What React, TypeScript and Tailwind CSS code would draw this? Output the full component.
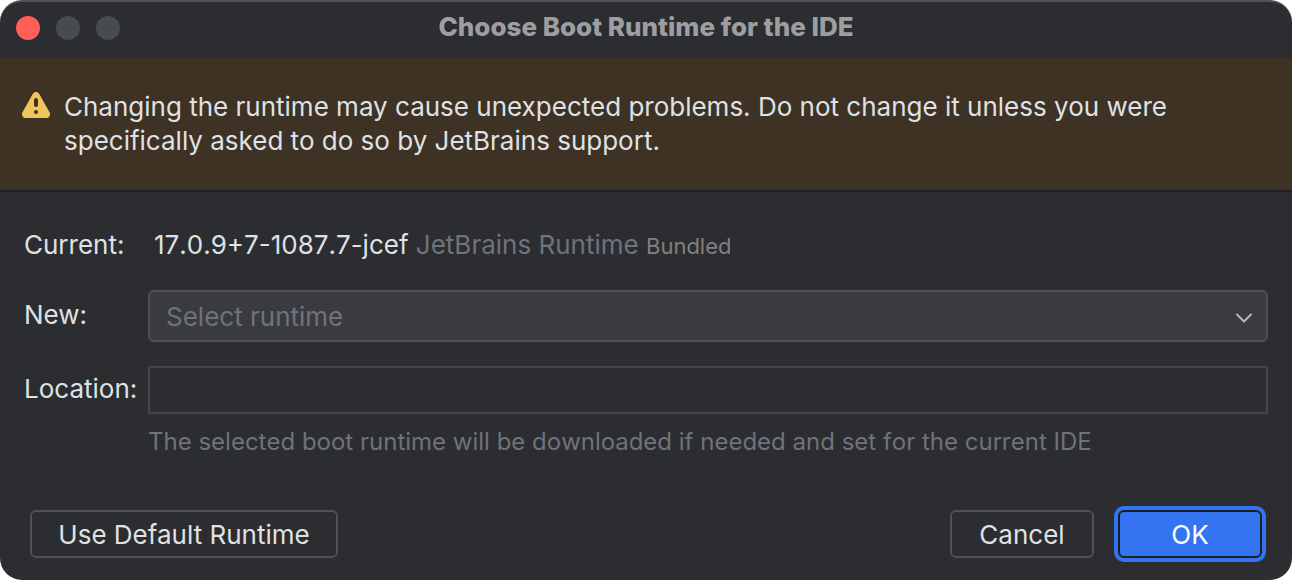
import { useState } from 'react'

const plainButton =
  'h-12 rounded-md border-2 border-[#4e5157] pt-0.5 text-[26px] leading-8 text-[#dfe1e5]'

function WarningIcon() {
  return (
    <svg className="h-8 w-8 shrink-0" viewBox="0 0 32 32" aria-hidden="true">
      <path
        d="M12.9 3.8C14.3 1.4 17.7 1.4 19.1 3.8L29.5 22.2C30.9 24.8 29.3 28 26.3 28H5.7C2.7 28 1.1 24.8 2.5 22.2Z"
        fill="#f2c55c"
      />
      <rect x="14" y="8" width="4" height="9" rx="2" fill="#3d3223" />
      <circle cx="16" cy="22" r="2" fill="#3d3223" />
    </svg>
  )
}

export default function App() {
  const [location, setLocation] = useState('')

  return (
    <main className="flex min-h-screen w-full flex-col overflow-hidden rounded-[22px] border-t-2 border-[#505356] bg-[#2b2d30] font-['Inter',sans-serif] text-[26px] leading-[34px] text-[#dfe1e5]">
      <header className="grid h-14 grid-cols-[1fr_auto_1fr] items-center px-4 pb-1">
        <div className="flex gap-4">
          <button type="button" aria-label="Close" className="h-6 w-6 rounded-full bg-[#ff5f57]" />
          <button type="button" aria-label="Minimize" className="h-6 w-6 rounded-full bg-[#484b4d]" />
          <button type="button" aria-label="Zoom" className="h-6 w-6 rounded-full bg-[#484b4d]" />
        </div>
        <h1 className="pb-0.5 font-extrabold text-[#9d9ea0]">Choose Boot Runtime for the IDE</h1>
      </header>

      <section className="flex gap-3 border-b-2 border-[#1e1f22] bg-[#3d3223] pb-8 pl-5 pr-24 pt-8">
        <WarningIcon />
        <p>
          Changing the runtime may cause unexpected problems. Do not change it unless you were
          specifically asked to do so by JetBrains support.
        </p>
      </section>

      <form className="flex flex-1 flex-col" onSubmit={(event) => event.preventDefault()}>
        <div className="grid grid-cols-[124px_1fr] items-center px-6 pt-9">
          <span>Current:</span>
          <p className="pl-1.5 [font-kerning:none]">
            17.0.9+7-1087.7-jcef <span className="text-[#6f737a]">JetBrains Runtime</span>{' '}
            <span className="text-[22px] leading-none text-[#808080]">Bundled</span>
          </p>

          <label htmlFor="runtime" className="mt-[26px]">New:</label>
          <div className="relative mt-7">
            <select
              id="runtime"
              defaultValue=""
              className="block h-[52px] w-full appearance-none rounded-md border-2 border-[#4e5157] bg-[#393b40] px-4 pt-0.5 text-[#6f737a]"
            >
              <option value="">Select runtime</option>
            </select>
            <svg
              className="pointer-events-none absolute right-4 top-5 h-4 w-4"
              viewBox="0 0 16 16"
              fill="none"
              stroke="#b4b8bf"
              strokeWidth="2"
              strokeLinecap="round"
              strokeLinejoin="round"
              aria-hidden="true"
            >
              <path d="M1 4.5L8 11.5L15 4.5" />
            </svg>
          </div>

          <label htmlFor="location" className="mt-[22px]">Location:</label>
          <input
            id="location"
            type="text"
            value={location}
            onChange={(event) => setLocation(event.target.value)}
            className="mt-6 h-12 w-full border-2 border-[#43454a] bg-transparent px-4"
          />

          <p className="col-start-2 mt-3 text-2xl leading-8 text-[#6f737a] [font-kerning:none]">
            The selected boot runtime will be downloaded if needed and set for the current IDE
          </p>
        </div>

        <footer className="mt-auto flex items-center gap-5 pb-[18px] pl-[30px] pr-[26px]">
          <button type="button" className={`${plainButton} w-[308px]`}>Use Default Runtime</button>
          <button type="button" className={`${plainButton} ml-auto w-36`}>Cancel</button>
          <button type="submit" className="h-14 w-[152px] rounded-[10px] bg-[#3574f0] p-1 text-white">
            <span className="flex h-12 items-center justify-center rounded-md border-2 border-[#1e1f22] pt-0.5">OK</span>
          </button>
        </footer>
      </form>
    </main>
  )
}
